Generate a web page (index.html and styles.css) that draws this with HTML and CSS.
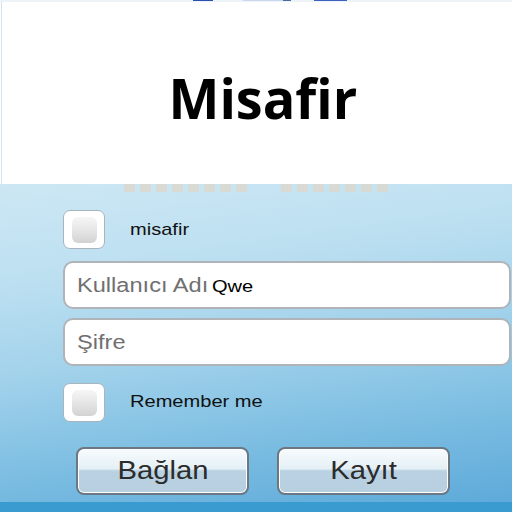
FILE: index.html
```html
<!DOCTYPE html>
<html>
<head>
<meta charset="utf-8">
<link rel="stylesheet" href="styles.css">
</head>
<body>
<div class="screen">
  <div class="topstrip">
    <span class="tm tm1"></span><span class="tm tm2"></span><span class="tm tm3"></span><span class="tm tm4"></span>
  </div>
  <div class="header">
    <h1 class="title">Misafir</h1>
  </div>
  <div class="form">
    <div class="ghost">
      <div class="ghost-group"><i></i><i></i><i></i><i></i><i></i><i></i><i></i><i></i></div>
      <div class="ghost-group"><i></i><i></i><i></i><i></i><i></i><i></i><i></i></div>
    </div>
    <div class="check-row row-guest">
      <div class="checkbox"><div class="check-inner"></div></div>
      <span class="label"><span class="stretch">misafir</span></span>
    </div>
    <div class="field field-user">
      <span class="placeholder stretch">Kullanıcı Adı</span><span class="value stretch">Qwe</span>
    </div>
    <div class="field field-pass">
      <span class="placeholder stretch">Şifre</span>
    </div>
    <div class="check-row row-remember">
      <div class="checkbox"><div class="check-inner"></div></div>
      <span class="label"><span class="stretch">Remember me</span></span>
    </div>
    <div class="buttons">
      <div class="btn"><span class="btn-text">Bağlan</span></div>
      <div class="btn"><span class="btn-text">Kayıt</span></div>
    </div>
  </div>
  <div class="bottombar"></div>
</div>
</body>
</html>
```
FILE: styles.css
```css
html, body {
  margin: 0;
  padding: 0;
  width: 512px;
  height: 512px;
  overflow: hidden;
  background: #ffffff;
}
.screen {
  width: 512px;
  height: 512px;
  display: flex;
  flex-direction: column;
  font-family: "Liberation Sans", Arial, sans-serif;
}
.topstrip {
  height: 2px;
  background: #eef3f8;
  display: flex;
  flex-shrink: 0;
}
.tm { height: 1px; display: block; }
.tm1 { margin-left: 193px; width: 20px; background: #2a4fae; }
.tm2 { margin-left: 30px; width: 40px; background: #c9d8ef; }
.tm3 { width: 8px; background: #4c68a8; }
.tm4 { margin-left: 23px; width: 33px; background: #3d62c2; }
.header {
  height: 182px;
  flex-shrink: 0;
  background: #ffffff;
  border-left: 1px solid #d6e3ee;
  margin-left: 1px;
  display: flex;
  align-items: center;
  justify-content: center;
}
.title {
  margin: 0 0 0 12px;
  font-family: "Open Sans", "Noto Sans", sans-serif;
  font-weight: 700;
  font-size: 56px;
  line-height: 1;
  color: #000;
  transform: scaleX(0.965);
  padding-top: 8px;
}
.form {
  height: 318px;
  flex-shrink: 0;
  background: linear-gradient(172deg, #cde7f4 0%, #bde0f1 25%, #a2d2eb 50%, #7dbee2 75%, #5eaada 100%);
  display: flex;
  flex-direction: column;
  padding-left: 63px;
  box-sizing: border-box;
}
.ghost {
  height: 8px;
  display: flex;
  gap: 34px;
  margin-left: 61px;
}
.ghost-group { display: flex; gap: 5px; }
.ghost-group i {
  display: block;
  width: 11px;
  height: 8px;
  background: #dcd7cb;
  opacity: 0.8;
}
.check-row {
  display: flex;
  align-items: center;
  height: 39px;
}
.row-guest { margin-top: 18px; }
.row-remember { margin-top: 17px; }
.checkbox {
  width: 40px;
  height: 37px;
  border: 1px solid #a9b4bc;
  border-radius: 7px;
  background: #ffffff;
  display: flex;
  align-items: center;
  justify-content: center;
}
.check-inner {
  width: 25px;
  height: 26px;
  border-radius: 6px;
  background: linear-gradient(180deg, #f6f6f6 0%, #e2e2e2 60%, #d2d2d2 100%);
}
.label {
  margin-left: 25px;
  font-size: 17px;
  color: #111;
}
.row-remember .label { margin-top: -2px; }
.stretch {
  display: inline-block;
  transform: scaleX(1.18);
  transform-origin: left center;
}
.field {
  width: 448px;
  height: 48px;
  box-sizing: border-box;
  border: 2px solid #b0b4b8;
  border-radius: 10px;
  background: #ffffff;
  display: flex;
  align-items: center;
  padding-left: 12px;
  margin-top: 12px;
}
.field-pass { margin-top: 9px; }
.placeholder {
  font-size: 20px;
  color: #707070;
}
.value {
  font-size: 17px;
  color: #000;
  margin-left: 24px;
  margin-top: 4px;
}
.buttons {
  display: flex;
  gap: 28px;
  margin-top: 25px;
  margin-left: 13px;
}
.btn {
  width: 173px;
  height: 48px;
  box-sizing: border-box;
  border: 2px solid #6b7783;
  border-radius: 8px;
  box-shadow: inset 0 0 0 1px #ffffff;
  background: linear-gradient(180deg, #f8fbfd 0%, #e4f0f6 45%, #b9d1e2 50%, #b8cfe0 100%);
  display: flex;
  align-items: center;
  justify-content: center;
}
.btn-text {
  display: inline-block;
  font-size: 25px;
  color: #2c2c2c;
  transform: scaleX(1.17);
  margin-top: -2px;
}
.bottombar {
  height: 10px;
  flex-shrink: 0;
  background: #3a9bd0;
}
```
